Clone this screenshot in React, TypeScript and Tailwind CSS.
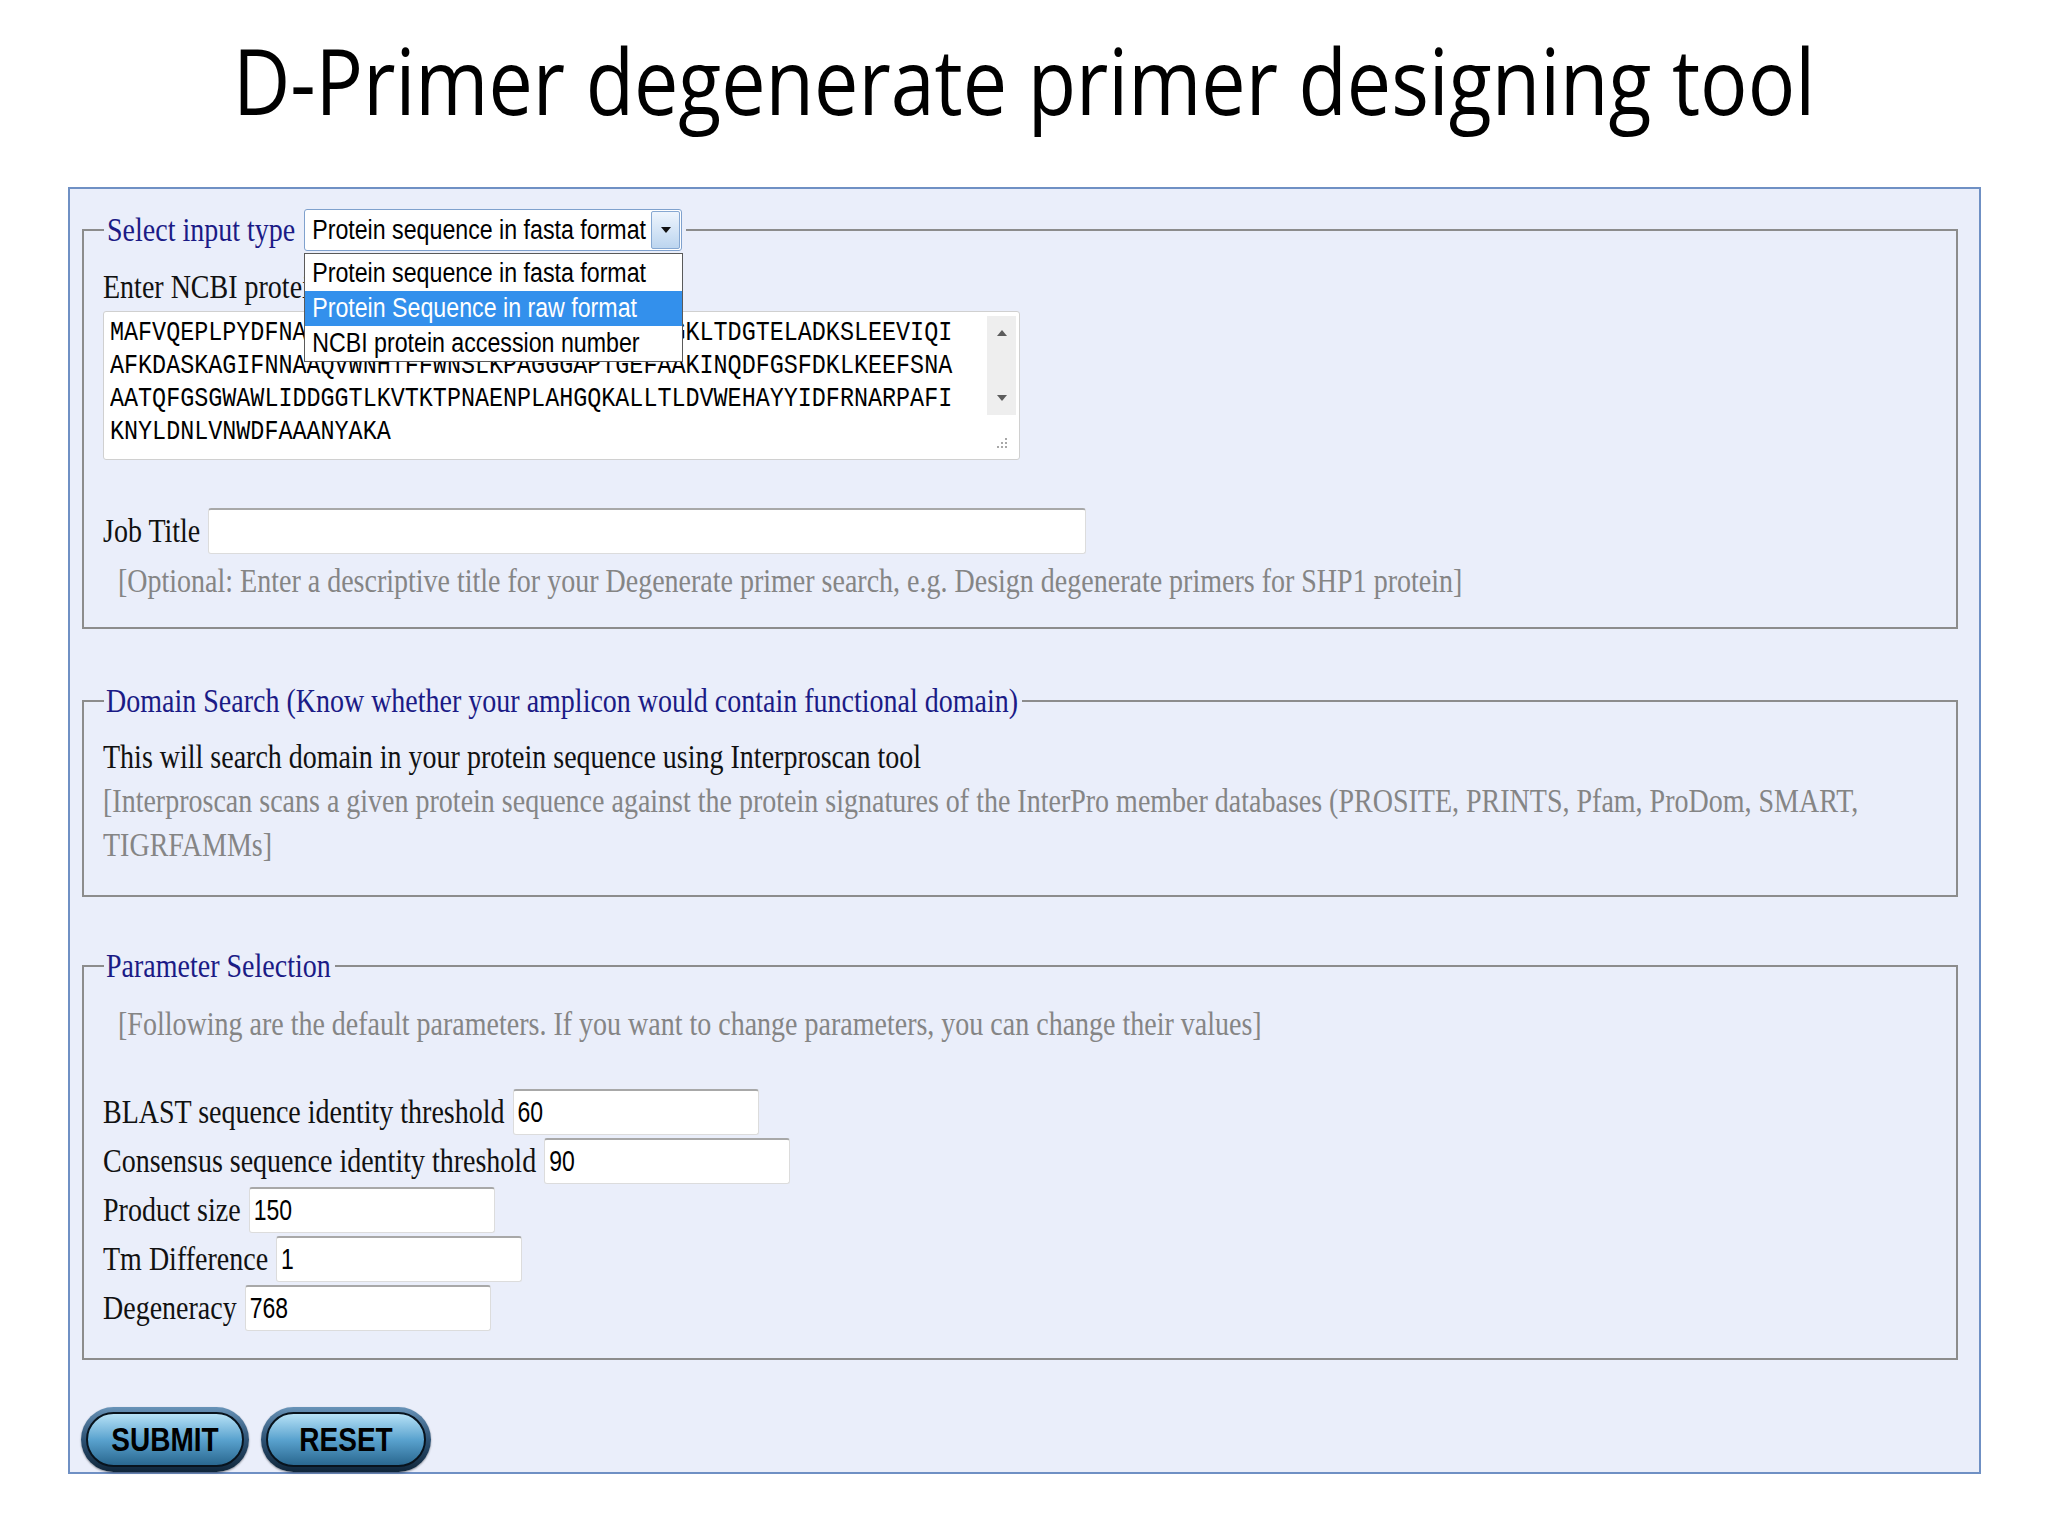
import React from "react";

// Shared text treatment: glyphs drawn a little taller than their advance width.
const SQ = "inline-block whitespace-nowrap origin-center scale-y-[1.17]";
const SERIF = "font-['Liberation_Serif','Times_New_Roman',serif]";
const SANS = "font-['Liberation_Sans',Arial,sans-serif]";
const MONO = "font-['Liberation_Mono','Courier_New',monospace]";

function Txt({ children, className = "" }: { children: React.ReactNode; className?: string }) {
  return <span className={`${SQ} ${className}`}>{children}</span>;
}

function Group({
  legend,
  children,
  className = "",
}: {
  legend: React.ReactNode;
  children: React.ReactNode;
  className?: string;
}) {
  return (
    <fieldset className={`border-2 border-[#8c8c8c] ${className}`}>
      <legend className="ml-[20px] pl-[2px] pr-[4px]">{legend}</legend>
      {children}
    </fieldset>
  );
}

function LegendText({ children }: { children: React.ReactNode }) {
  return (
    <div className="h-[40px] leading-[40px]">
      <Txt className={`${SERIF} text-[28px] text-[#1b1b86]`}>{children}</Txt>
    </div>
  );
}

function TextBox({ value, width }: { value: string; width: string }) {
  return (
    <div
      className={`${width} h-[46px] bg-white border border-[#dcdcdc] border-t-2 border-t-[#a8a8a8] rounded-[3px] flex items-center pl-[4px]`}
    >
      <Txt className={`${SANS} text-[23px] text-black scale-y-[1.25]`}>{value}</Txt>
    </div>
  );
}

function ParamRow({ label, value }: { label: string; value: string }) {
  return (
    <div className="h-[46px] flex items-center gap-[8px]">
      <Txt className={`${SERIF} text-[28px] text-[#111]`}>{label}</Txt>
      <TextBox value={value} width="w-[246px]" />
    </div>
  );
}

function PillButton({ label, width }: { label: string; width: string }) {
  return (
    <div
      className={`${width} h-[65px] rounded-full bg-linear-to-b from-[#6893b8] via-[#2d5274] to-[#10263a] p-[5px] shadow-[0_1px_2px_rgba(0,0,0,0.4)]`}
    >
      <div className="h-full rounded-full border-2 border-[#08131d] bg-linear-to-b from-[#b6e2f6] via-[#5aa3cf] to-[#2a6890] flex items-center justify-center">
        <Txt className={`${SANS} font-bold text-[28px] text-black scale-y-[1.1]`}>{label}</Txt>
      </div>
    </div>
  );
}

const SEQUENCE = [
  "MAFVQEPLPYDFNALEPHISKETLEFHYGKHHQAYVTNLNGKLTDGTELADKSLEEVIQI",
  "AFKDASKAGIFNNAAQVWNHTFFWNSLKPAGGGAPTGEFAAKINQDFGSFDKLKEEFSNA",
  "AATQFGSGWAWLIDDGGTLKVTKTPNAENPLAHGQKALLTLDVWEHAYYIDFRNARPAFI",
  "KNYLDNLVNWDFAAANYAKA",
];

const INPUT_TYPES = [
  "Protein sequence in fasta format",
  "Protein Sequence in raw format",
  "NCBI protein accession number",
];

function InputTypeSelect() {
  return (
    <div className="relative w-[378px] h-[42px] bg-white border border-[#7fa1cd] rounded-[3px] flex items-stretch">
      <div className="flex-1 flex items-center pl-[7px]">
        <Txt className={`${SANS} text-[23.2px] text-black`}>{INPUT_TYPES[0]}</Txt>
      </div>
      <div className="w-[29px] m-[1px] border border-[#86a8d2] rounded-[2px] bg-linear-to-b from-[#eef5fd] to-[#bcd5ef] flex items-center justify-center">
        <svg width="12" height="8" viewBox="0 0 12 8">
          <path d="M1 1 L11 1 L6 7 Z" fill="#111" />
        </svg>
      </div>
      {/* open option list */}
      <div className="absolute left-[-1px] top-[43px] z-20 w-[379px] bg-white border border-[#5a5a5a] pt-[2px]">
        {INPUT_TYPES.map((opt, i) => (
          <div
            key={opt}
            className={`h-[35px] flex items-center pl-[7px] ${i === 1 ? "bg-[#3390ec] text-white" : "text-black"}`}
          >
            <Txt className={`${SANS} text-[23.2px]`}>{opt}</Txt>
          </div>
        ))}
      </div>
    </div>
  );
}

function SequenceArea() {
  return (
    <div className="mt-[4px] w-[917px] h-[149px] bg-white border border-[#d0d0d0] rounded-[3px] flex justify-between">
      <div className="pl-[6px] pt-[5px]">
        {SEQUENCE.map((line) => (
          <div key={line} className="h-[33px] leading-[33px]">
            <Txt className={`${MONO} text-[23.4px] text-black scale-y-[1.3]`}>{line}</Txt>
          </div>
        ))}
      </div>
      <div className="w-[29px] mr-[3px] flex flex-col items-stretch">
        <div className="mt-[4px] h-[99px] bg-[#eeeeee] flex flex-col items-center justify-between py-[14px]">
          <svg width="10" height="6" viewBox="0 0 10 6">
            <path d="M0 6 L5 0 L10 6 Z" fill="#5c5c5c" />
          </svg>
          <svg width="10" height="6" viewBox="0 0 10 6">
            <path d="M0 0 L10 0 L5 6 Z" fill="#5c5c5c" />
          </svg>
        </div>
        <div className="flex-1" />
        <div className="self-end mr-[8px] mb-[10px]">
          <svg width="12" height="12" viewBox="0 0 12 12">
            <rect x="9" y="1" width="2" height="2" fill="#a8a8a8" />
            <rect x="9" y="5" width="2" height="2" fill="#a8a8a8" />
            <rect x="5" y="5" width="2" height="2" fill="#a8a8a8" />
            <rect x="9" y="9" width="2" height="2" fill="#a8a8a8" />
            <rect x="5" y="9" width="2" height="2" fill="#a8a8a8" />
            <rect x="1" y="9" width="2" height="2" fill="#a8a8a8" />
          </svg>
        </div>
      </div>
    </div>
  );
}

export default function App() {
  return (
    <div className="w-[2048px] min-h-[1536px] bg-white">
      <div className="h-[187px] pt-[40px]">
        <h1 className="w-full text-center h-[80px] leading-[80px]">
          <span className="inline-block whitespace-nowrap origin-center scale-y-[1.15] font-['Open_Sans',sans-serif] text-[79px] text-black">
            D-Primer degenerate primer designing tool
          </span>
        </h1>
      </div>

      <div className="ml-[68px] w-[1913px] h-[1287px] border-2 border-[#6f90c4] bg-[#eaeefa] pt-[20px] pl-[12px] pr-[21px]">
        {/* input */}
        <Group
          legend={
            <div className="flex items-center gap-[9px] pl-[1px]">
              <Txt className={`${SERIF} text-[28px] text-[#1b1b86]`}>Select input type</Txt>
              <InputTypeSelect />
            </div>
          }
        >
          <div className="pl-[19px] pb-[26px]">
            <div className="mt-[16px] h-[40px] leading-[40px]">
              <Txt className={`${SERIF} text-[28px] text-[#111]`}>Enter NCBI protein sequence</Txt>
            </div>
            <SequenceArea />
            <div className="mt-[48px] h-[46px] flex items-center gap-[8px]">
              <Txt className={`${SERIF} text-[28px] text-[#111]`}>Job Title</Txt>
              <TextBox value="" width="w-[878px]" />
            </div>
            <div className="mt-[7px] h-[40px] leading-[40px] pl-[15px]">
              <Txt className={`${SERIF} text-[28px] text-[#858585]`}>
                [Optional: Enter a descriptive title for your Degenerate primer search, e.g. Design degenerate primers for SHP1 protein]
              </Txt>
            </div>
          </div>
        </Group>

        {/* domain search */}
        <Group
          className="mt-[52px]"
          legend={<LegendText>Domain Search (Know whether your amplicon would contain functional domain)</LegendText>}
        >
          <div className="pl-[19px] pb-[28px]">
            <div className="mt-[16px] h-[40px] leading-[40px]">
              <Txt className={`${SERIF} text-[28px] text-[#111]`}>
                This will search domain in your protein sequence using Interproscan tool
              </Txt>
            </div>
            <div className="mt-[2px] h-[44px] leading-[44px]">
              <Txt className={`${SERIF} text-[28px] text-[#858585]`}>
                [Interproscan scans a given protein sequence against the protein signatures of the InterPro member databases (PROSITE, PRINTS, Pfam, ProDom, SMART,
              </Txt>
            </div>
            <div className="h-[44px] leading-[44px]">
              <Txt className={`${SERIF} text-[28px] text-[#858585]`}>TIGRFAMMs]</Txt>
            </div>
          </div>
        </Group>

        {/* parameters */}
        <Group className="mt-[49px]" legend={<LegendText>Parameter Selection</LegendText>}>
          <div className="pl-[19px] pb-[27px]">
            <div className="mt-[18px] h-[40px] leading-[40px] pl-[15px]">
              <Txt className={`${SERIF} text-[28px] text-[#858585]`}>
                [Following are the default parameters. If you want to change parameters, you can change their values]
              </Txt>
            </div>
            <div className="mt-[45px] flex flex-col gap-[3px]">
              <ParamRow label="BLAST sequence identity threshold" value="60" />
              <ParamRow label="Consensus sequence identity threshold" value="90" />
              <ParamRow label="Product size" value="150" />
              <ParamRow label="Tm Difference" value="1" />
              <ParamRow label="Degeneracy" value="768" />
            </div>
          </div>
        </Group>

        <div className="mt-[47px] flex gap-[12px] -ml-[1px]">
          <PillButton label="SUBMIT" width="w-[168px]" />
          <PillButton label="RESET" width="w-[170px]" />
        </div>
      </div>
    </div>
  );
}
